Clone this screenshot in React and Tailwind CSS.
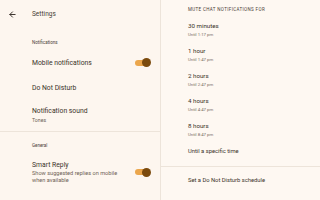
import React from 'react';
import { ArrowLeft } from 'lucide-react';

const font = { fontFamily: 'Roboto, "Liberation Sans", sans-serif' };

function Toggle() {
  return (
    <div className="relative w-[16px] h-[10px] flex items-center">
      <div className="w-[14px] h-[6px] rounded-full bg-[#eba64c]" />
      <div className="absolute right-0 top-[0.5px] w-[9px] h-[9px] rounded-full bg-[#7b4a0d]" />
    </div>
  );
}

const options = [
  { title: '30 minutes', sub: 'Until 1:17 pm' },
  { title: '1 hour', sub: 'Until 1:47 pm' },
  { title: '2 hours', sub: 'Until 2:47 pm' },
  { title: '4 hours', sub: 'Until 4:47 pm' },
  { title: '8 hours', sub: 'Until 8:47 pm' },
];

export default function App() {
  return (
    <div className="flex w-[320px] h-[200px] bg-[#fdf6ef] text-[#3a3229] overflow-hidden" style={font}>
      {/* Left pane */}
      <div className="w-[161px] h-full border-r border-[#ede4da] flex flex-col">
        <div className="h-[28px] flex items-center">
          <ArrowLeft className="ml-[8px] w-[9px] h-[9px] text-[#2a231c]" strokeWidth={2.4} />
          <span className="ml-[15px] text-[6.5px] leading-[10px] text-[#453c33]">Settings</span>
        </div>
        <div className="h-[22px] pl-[32px] pt-[12px] text-[4.5px] leading-[6px] text-[#4a4037]">Notifications</div>
        <div className="h-[25px] pl-[32px] pr-[9px] flex items-center justify-between">
          <span className="text-[6.8px] leading-[10px]">Mobile notifications</span>
          <Toggle />
        </div>
        <div className="h-[25px] pl-[32px] flex items-center">
          <span className="text-[6.8px] leading-[10px]">Do Not Disturb</span>
        </div>
        <div className="h-[32px] pl-[32px] pt-[6px] border-b border-[#ede4da]">
          <div className="text-[6.8px] leading-[10px]">Notification sound</div>
          <div className="text-[5.2px] leading-[8px] text-[#6e6256]">Tones</div>
        </div>
        <div className="h-[25px] pl-[32px] pt-[11px] text-[4.5px] leading-[6px] text-[#4a4037]">General</div>
        <div className="pl-[32px] pr-[9px] pt-[3px] flex items-center justify-between">
          <div>
            <div className="text-[6.8px] leading-[10px]">Smart Reply</div>
            <div className="text-[5.6px] leading-[7px] text-[#6e6256] w-[92px]">Show suggested replies on mobile when available</div>
          </div>
          <Toggle />
        </div>
      </div>

      {/* Right pane */}
      <div className="flex-1 h-full flex flex-col bg-[#fef8f2]">
        <div className="h-[17px] pl-[27px] pt-[7px] text-[4.5px] leading-[6px] tracking-[0.35px] text-[#4a4037]">
          MUTE CHAT NOTIFICATIONS FOR
        </div>
        {options.map((o) => (
          <div key={o.title} className="h-[25px] pl-[27px] pt-[4px]">
            <div className="text-[6.2px] leading-[10px]">{o.title}</div>
            <div className="text-[4.3px] leading-[7px] text-[#776b5f]">{o.sub}</div>
          </div>
        ))}
        <div className="h-[25px] pl-[27px] pt-[4px] border-b border-[#ede4da]">
          <div className="text-[5.8px] leading-[10px]">Until a specific time</div>
        </div>
        <div className="pl-[27px] pt-[8px]">
          <div className="text-[5.8px] leading-[10px]">Set a Do Not Disturb schedule</div>
        </div>
      </div>
    </div>
  );
}
